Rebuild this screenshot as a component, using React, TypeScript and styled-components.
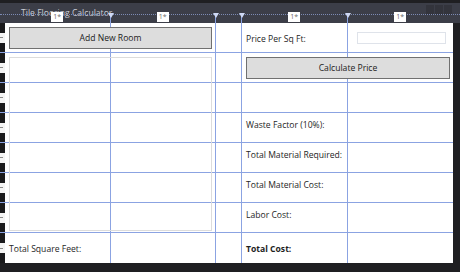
import React from 'react';
import styled, { createGlobalStyle, css } from 'styled-components';

const COLS = 'minmax(0, 1fr) minmax(0, 1fr) 26px minmax(0, 1fr) minmax(0, 1fr)';
const ROWS = 8;
const LINE = '#8ba3e2';

type Place = { $col: string; $row: string };

const place = css<Place>`
  grid-column: ${p => p.$col};
  grid-row: ${p => p.$row};
  position: relative;
  z-index: 2;
  min-width: 0;
`;

const GlobalStyle = createGlobalStyle`
  html, body {
    margin: 0;
    padding: 0;
    background: #1f1f22;
  }
  body {
    font-family: "Open Sans", "Noto Sans", sans-serif;
  }
`;

const Frame = styled.div`
  width: 460px;
  height: 272px;
  background: #1f1f22;
  display: flex;
  flex-direction: column;
  overflow: hidden;
`;

const TitleBar = styled.div`
  position: relative;
  flex: none;
  height: 20px;
  margin-top: 3px;
  background: #3c3e48;
  display: flex;
  align-items: center;
  padding-left: 21px;
  padding-bottom: 1px;
  box-sizing: border-box;
`;

const TitleText = styled.span`
  flex: 1;
  font-size: 8.6px;
  color: #c9cbd4;
  line-height: 12px;
`;

const WindowButtons = styled.div`
  display: flex;
  gap: 1px;
  align-self: flex-start;
  margin: 2px 8px 0 0;
`;

const WindowButton = styled.div`
  width: 8px;
  height: 10px;
  background: #33343c;
`;

const Ruler = styled.div`
  position: absolute;
  left: 0;
  right: 0;
  top: 11px;
  bottom: 0;
  border-top: 1px dotted #7c8ab4;
  padding: 0 7px 0 5px;
  display: grid;
  grid-template-columns: ${COLS};
`;

const RulerCell = styled.div<{ $mark: boolean }>`
  position: relative;
  display: flex;
  justify-content: center;
  align-items: flex-start;
  border-right: ${p => (p.$mark ? `1px solid ${LINE}` : 'none')};

  ${p =>
    p.$mark &&
    css`
      &::after {
        content: '';
        position: absolute;
        top: -2px;
        right: -4px;
        border-left: 3.5px solid transparent;
        border-right: 3.5px solid transparent;
        border-top: 5px solid #cfd9f4;
      }
    `}
`;

const RulerTag = styled.span`
  margin-top: -3px;
  width: 12px;
  height: 10px;
  background: #ffffff;
  color: #6a6a6a;
  font-size: 7px;
  line-height: 10px;
  text-align: center;
`;

const Body = styled.div`
  display: flex;
  height: 240px;
  flex: none;
`;

const RowRuler = styled.div`
  width: 5px;
  flex: none;
  background: #1a1a1c;
  display: grid;
  grid-template-rows: repeat(${ROWS}, 1fr);
`;

const RowRulerCell = styled.div<{ $last: boolean }>`
  display: flex;
  align-items: center;
  border-bottom: ${p => (p.$last ? 'none' : `1px solid ${LINE}`)};
`;

const RowTag = styled.div`
  width: 5px;
  height: 10px;
  background: #f4f4f4;
  display: flex;
  align-items: center;

  &::before {
    content: '';
    width: 3px;
    height: 1px;
    background: #8a8a8a;
  }
`;

const Client = styled.div`
  position: relative;
  width: 448px;
  flex: none;
  background: #ffffff;
  display: grid;
  grid-template-columns: ${COLS};
  grid-template-rows: repeat(${ROWS}, 1fr);
`;

const GridLines = styled.div`
  position: absolute;
  inset: 0;
  display: grid;
  grid-template-columns: ${COLS};
  grid-template-rows: repeat(${ROWS}, 1fr);
  pointer-events: none;
  z-index: 1;
`;

const LineCell = styled.div<{ $lastCol: boolean; $lastRow: boolean }>`
  border-right: ${p => (p.$lastCol ? 'none' : `1px solid ${LINE}`)};
  border-bottom: ${p => (p.$lastRow ? 'none' : `1px solid ${LINE}`)};
`;

const Button = styled.button<Place & { $margin: string }>`
  ${place};
  margin: ${p => p.$margin};
  justify-self: stretch;
  align-self: stretch;
  background: #dddddd;
  border: 1px solid #707070;
  border-radius: 0;
  padding: 0;
  font-family: inherit;
  font-size: 8.6px;
  color: #1b1b1b;
`;

const ListBox = styled.div<Place>`
  ${place};
  margin: 4px 4px 2px 4px;
  border: 1px solid #dcdcdc;
`;

const TextBox = styled.input<Place>`
  ${place};
  margin: 9px 7px 0 9px;
  width: auto;
  height: 12px;
  box-sizing: border-box;
  align-self: start;
  border: 1px solid #dfe3ea;
  padding: 0 2px;
  outline: none;
`;

const Label = styled.div<Place & { $top?: boolean; $bold?: boolean }>`
  ${place};
  display: flex;
  align-items: ${p => (p.$top ? 'flex-start' : 'center')};
  padding: ${p => (p.$top ? '6px 0 0 4px' : '2px 0 0 4px')};
  font-size: 8.6px;
  line-height: 12px;
  color: #1e1e1e;
  font-weight: ${p => (p.$bold ? 700 : 400)};
  white-space: nowrap;
`;

const rulerCols = [true, true, false, true, true];

export default function App() {
  return (
    <>
      <GlobalStyle />
      <Frame>
        <TitleBar>
          <TitleText>Tile Flooring Calculator</TitleText>
          <WindowButtons>
            <WindowButton />
            <WindowButton />
            <WindowButton />
          </WindowButtons>
          <Ruler>
            {rulerCols.map((label, i) => (
              <RulerCell key={i} $mark={i < rulerCols.length - 1}>
                {label && <RulerTag>1*</RulerTag>}
              </RulerCell>
            ))}
          </Ruler>
        </TitleBar>
        <Body>
          <RowRuler>
            {Array.from({ length: ROWS }).map((_, i) => (
              <RowRulerCell key={i} $last={i === ROWS - 1}>
                <RowTag />
              </RowRulerCell>
            ))}
          </RowRuler>
          <Client>
            <GridLines>
              {Array.from({ length: ROWS * 5 }).map((_, i) => (
                <LineCell key={i} $lastCol={i % 5 === 4} $lastRow={i >= (ROWS - 1) * 5} />
              ))}
            </GridLines>

            <Button $col="1 / 3" $row="1" $margin="4px 4px 4px 4px">Add New Room</Button>
            <ListBox $col="1 / 3" $row="2 / 8" />
            <Label $col="1 / 3" $row="8">Total Square Feet:</Label>

            <Label $col="4" $row="1">Price Per Sq Ft:</Label>
            <TextBox $col="5" $row="1" />
            <Button $col="4 / 6" $row="2" $margin="4px 3px 4px 4px">Calculate Price</Button>
            <Label $col="4" $row="4" $top>Waste Factor (10%):</Label>
            <Label $col="4" $row="5" $top>Total Material Required:</Label>
            <Label $col="4" $row="6" $top>Total Material Cost:</Label>
            <Label $col="4" $row="7" $top>Labor Cost:</Label>
            <Label $col="4" $row="8" $bold>Total Cost:</Label>
          </Client>
        </Body>
      </Frame>
    </>
  );
}
